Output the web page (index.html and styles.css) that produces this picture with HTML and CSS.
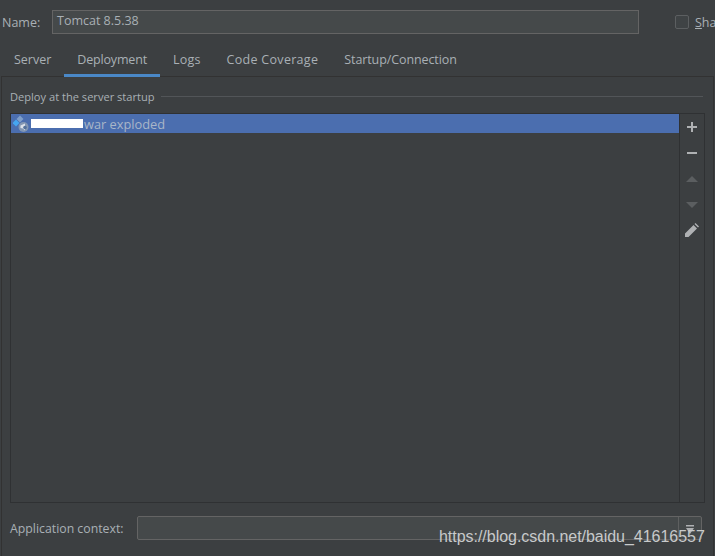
FILE: index.html
```html
<!DOCTYPE html>
<html lang="en">
<head>
<meta charset="utf-8">
<title>Run configuration</title>
<link rel="stylesheet" href="styles.css">
</head>
<body>
<div class="dialog">
  <div class="name-row">
    <label class="name-label">Name:</label>
    <div class="field name-field">Tomcat 8.5.38</div>
    <span class="checkbox"></span>
    <span class="share"><u>S</u>ha</span>
  </div>
  <div class="tabs">
    <span class="tab">Server</span>
    <span class="tab active">Deployment</span>
    <span class="tab logs">Logs</span>
    <span class="tab wide">Code Coverage</span>
    <span class="tab narrow">Startup/Connection</span>
  </div>
  <div class="panel">
    <div class="group-title"><span>Deploy at the server startup</span><i class="rule"></i></div>
    <div class="list-box">
      <div class="list">
        <div class="row">
          <svg class="artifact" width="18" height="18" viewBox="0 0 18 18">
            <path d="M7 .5 10.500 4 7 7.500 3.500 4z" fill="#7f9fca"/>
            <path d="M3 4.500 6.500 8 3 11.500-.5 8z" fill="#45a6f0"/>
            <circle cx="10.500" cy="12" r="5" fill="#8296b2"/>
            <path d="M7.500 10.500 12 8.500v7l-2-2-2.500-.5z" fill="#dbe1e9"/>
            <circle cx="12" cy="12.500" r="1.800" fill="#53719b"/>
          </svg>
          <span class="row-text"><span class="redaction"></span>war exploded</span>
        </div>
      </div>
      <div class="toolbar">
        <svg class="tool" width="12" height="12" viewBox="0 0 12 12"><path d="M5 1h2v4h4v2H7v4H5V7H1V5h4z" fill="#afb1b3"/></svg>
        <svg class="tool" width="12" height="12" viewBox="0 0 12 12"><path d="M1 5h10v2H1z" fill="#afb1b3"/></svg>
        <svg class="tool" width="12" height="12" viewBox="0 0 12 12"><path d="M6 3l6 6H0z" fill="#5b5e60"/></svg>
        <svg class="tool" width="12" height="12" viewBox="0 0 12 12"><path d="M0 3h12l-6 6z" fill="#5b5e60"/></svg>
        <svg class="tool pencil" width="14" height="14" viewBox="0 0 14 14"><path d="M0 14v-3.500L8.500 2 12 5.500 3.500 14zM9.500 1l1-1L14 3.500l-1 1z" fill="#afb1b3"/></svg>
      </div>
    </div>
    <div class="context-row">
      <label class="context-label">Application context:</label>
      <div class="field combo">
        <span class="combo-button">
          <svg class="combo-arrow" width="10" height="10" viewBox="0 0 10 10"><path d="M1 0h8v1.500H1zM1 3h8L5 9z" fill="#afb1b3"/></svg>
        </span>
      </div>
    </div>
  </div>
  <div class="watermark">https://blog.csdn.net/baidu_41616557</div>
</div>
</body>
</html>
```
FILE: styles.css
```css
html, body {
  margin: 0;
  padding: 0;
  height: 100%;
  overflow: hidden;
  background: #3c3f41;
}
.dialog {
  position: relative;
  width: 715px;
  height: 556px;
  overflow: hidden;
  background: #3c3f41;
  color: #a9b0b5;
  font-family: "Open Sans", "Noto Sans", sans-serif;
  font-size: 12.5px;
}
.name-row {
  display: flex;
  align-items: center;
  height: 24px;
  padding: 10px 0 0 2px;
}
.name-label {
  flex: none;
  width: 50px;
}
.field {
  box-sizing: border-box;
  background: #45494a;
  border: 1px solid #646464;
}
.name-field {
  flex: none;
  width: 587px;
  height: 24px;
  line-height: 20px;
  padding-left: 4px;
  font-size: 12.5px;
  color: #a9b0b5;
}
.checkbox {
  flex: none;
  box-sizing: border-box;
  width: 14px;
  height: 14px;
  margin-left: 36px;
  border: 1px solid #5c5f61;
  border-radius: 2px;
  background: #3f4345;
}
.share {
  margin-left: 6px;
  white-space: nowrap;
}
.tabs {
  display: flex;
  height: 31px;
  margin-top: 11px;
  padding-left: 1px;
}
.tab {
  position: relative;
  height: 22px;
  padding: 7px 13px 0;
  line-height: 16px;
  border-bottom: 3px solid transparent;
}
.tab.logs { letter-spacing: .2px; }
.tab.wide { letter-spacing: .3px; }
.tab.narrow { letter-spacing: -.1px; }
.tab.active {
  border-bottom-color: #4a88c7;
  letter-spacing: -.18px;
}
.panel {
  box-sizing: border-box;
  height: 480px;
  margin: 0 1px;
  padding: 0 0 0 8px;
  border: 1px solid #323232;
  border-bottom: 0;
}
.group-title {
  display: flex;
  align-items: center;
  gap: 6px;
  height: 16px;
  margin-top: 12px;
  margin-right: 10px;
  font-size: 11.1px;
  line-height: 16px;
}
.rule {
  flex: 1;
  height: 1px;
  margin-bottom: 2px;
  background: #525558;
}
.list-box {
  box-sizing: border-box;
  display: flex;
  width: 695px;
  height: 390px;
  margin-top: 8px;
  border: 1px solid #2f3133;
}
.list {
  flex: 1;
  border-right: 1px solid #2f3133;
}
.row {
  display: flex;
  align-items: center;
  height: 19px;
  background: #4b6eaf;
  padding-left: 2px;
}
.artifact { flex: none; }
.row-text {
  position: relative;
  padding-left: 53px;
  color: #a9b6c8;
  font-size: 12.800px;
}
.redaction {
  position: absolute;
  left: 0;
  top: 4px;
  width: 52px;
  height: 9px;
  background: #fff;
}
.toolbar {
  display: flex;
  flex-direction: column;
  align-items: center;
  width: 24px;
  padding-top: 7px;
  gap: 14px;
}
.tool { flex: none; }
.pencil { margin-top: -2px; }
.context-row {
  display: flex;
  align-items: center;
  height: 24px;
  margin-top: 13px;
}
.context-label { width: 127px; font-size: 12.300px; white-space: nowrap; }
.combo {
  position: relative;
  width: 565px;
  height: 24px;
  border-radius: 2px;
  background: #45494a;
}
.combo-button {
  position: absolute;
  right: 0;
  top: 0;
  bottom: 0;
  width: 22px;
  border-left: 1px solid #5e6060;
  display: flex;
  align-items: center;
  justify-content: center;
}
.combo-arrow { margin-top: 3px; }
.watermark {
  position: absolute;
  left: 439px;
  top: 527px;
  font-family: "Liberation Sans", Arial, sans-serif;
  font-size: 16px;
  letter-spacing: -.03px;
  line-height: 20px;
  color: #c8cacb;
  white-space: nowrap;
}
```
